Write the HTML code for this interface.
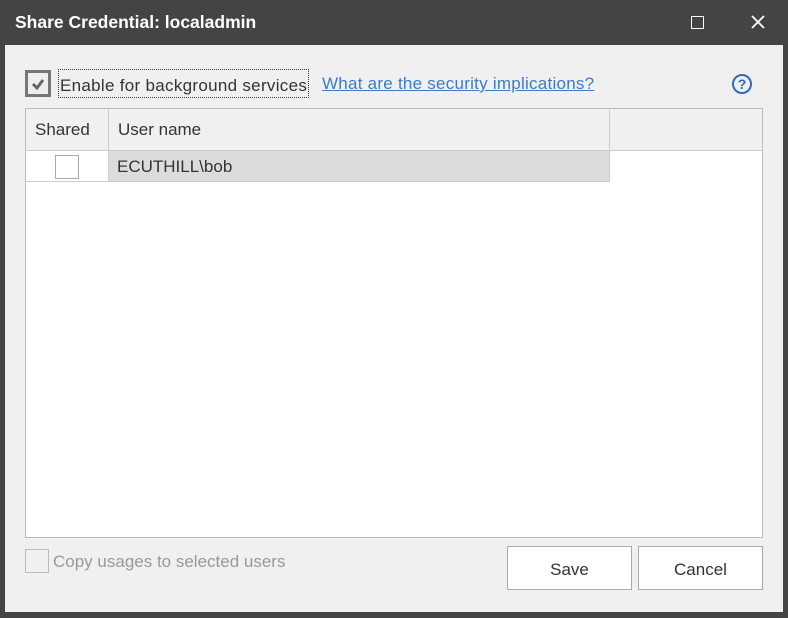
<!DOCTYPE html><html><head><style>
body{margin:0;width:788px;height:618px;background:#444;font-family:"Liberation Sans",sans-serif;position:relative;overflow:hidden}
.a{position:absolute}
.t{color:#fff;font-weight:bold;font-size:17.5px;left:15px;top:12px}
.c{left:5px;top:45px;width:778px;height:567px;background:#f0f0f0}
.txt{font-size:17px;color:#333}
</style></head><body>
<div class="a t">Share Credential: localadmin</div>
<div class="a" style="left:691px;top:16px;width:13px;height:13px;border:1.5px solid #fff;box-sizing:border-box"></div>
<svg class="a" style="left:751px;top:15px" width="14" height="14"><path d="M1 1L13 13M13 1L1 13" stroke="#fff" stroke-width="1.8"/></svg>
<div class="a c"></div>
<div class="a" style="left:25px;top:70px;width:26px;height:27px;border:3px solid #777;box-sizing:border-box;background:#eee"></div>
<svg class="a" style="left:30px;top:76px" width="16" height="16"><path d="M3 8L7 12L13 4" stroke="#666" stroke-width="3" fill="none"/></svg>
<div class="a txt" style="left:58px;top:69px;height:27px;line-height:31px;border:1px dotted #333;padding:0 1px;letter-spacing:0.3px">Enable for background services</div>
<div class="a" style="left:322px;top:74px;font-size:17px;color:#3c7bc8;text-decoration:underline;letter-spacing:0.25px">What are the security implications?</div>
<div class="a" style="left:732px;top:74px;width:20px;height:20px;border:2.5px solid #2c6bc0;border-radius:50%;box-sizing:border-box;color:#2c6bc0;font-weight:bold;font-size:14px;text-align:center;line-height:16px">?</div>
<div class="a" style="left:25px;top:108px;width:738px;height:430px;background:#fff;border:1px solid #bbb;box-sizing:border-box"></div>
<div class="a" style="left:26px;top:109px;width:736px;height:41px;background:#f0f0f0;border-bottom:1px solid #ccc"></div>
<div class="a" style="left:108px;top:109px;width:1px;height:73px;background:#ccc"></div>
<div class="a" style="left:609px;top:109px;width:1px;height:73px;background:#ccc"></div>
<div class="a txt" style="left:35px;top:120px">Shared</div>
<div class="a txt" style="left:118px;top:120px">User name</div>
<div class="a" style="left:109px;top:151px;width:500px;height:31px;background:#dcdcdc"></div>
<div class="a" style="left:26px;top:181px;width:583px;height:1px;background:#ccc"></div>
<div class="a" style="left:55px;top:155px;width:24px;height:24px;border:1px solid #aaa;box-sizing:border-box;background:#fff"></div>
<div class="a txt" style="left:117px;top:157px">ECUTHILL\bob</div>
<div class="a" style="left:25px;top:549px;width:24px;height:24px;border:1px solid #bbb;box-sizing:border-box"></div>
<div class="a" style="left:53px;top:552px;font-size:17px;color:#999">Copy usages to selected users</div>
<div class="a txt" style="left:507px;top:546px;width:125px;height:44px;background:#fff;border:1px solid #aaa;box-sizing:border-box;text-align:center;line-height:45px">Save</div>
<div class="a txt" style="left:638px;top:546px;width:125px;height:44px;background:#fff;border:1px solid #aaa;box-sizing:border-box;text-align:center;line-height:45px">Cancel</div>
</body></html>
